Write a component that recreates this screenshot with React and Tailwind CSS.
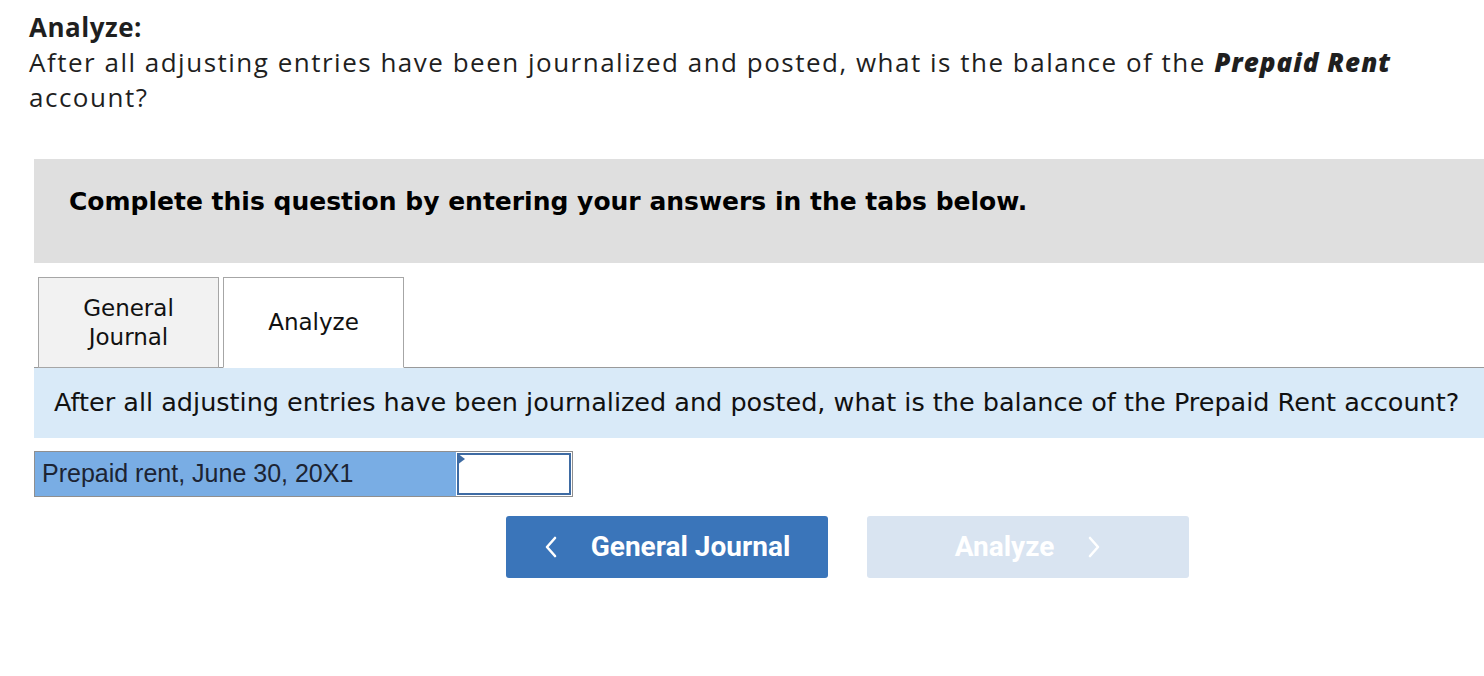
import React, { useState } from "react";

const App = () => {
  const [tab, setTab] = useState("analyze");
  const [value, setValue] = useState("");

  return (
    <div className="min-h-screen bg-white text-[#1f1f1f]">
      <div className="pl-[29px] pr-4 pt-[10px] font-['Open_Sans','Lato',sans-serif] tracking-[1.5px]">
        <h1 className="text-[26px] leading-[35px] font-bold tracking-[0.5px]">Analyze:</h1>
        <p className="text-[26px] leading-[35px]">
          After all adjusting entries have been journalized and posted, what is the balance of the{" "}
          <strong className="italic font-extrabold tracking-[1px]">Prepaid Rent</strong>
          <br />
          account?
        </p>
      </div>

      <div className="ml-[34px] mt-[44px] font-['DejaVu_Sans','Verdana',sans-serif]">
        <div className="bg-[#dfdfdf] h-[104px] pl-[35px] pt-[28px]">
          <p className="text-[25px] leading-[29px] font-bold text-black whitespace-nowrap">
            Complete this question by entering your answers in the tabs below.
          </p>
        </div>

        <div className="mt-[14px] flex items-end border-b border-[#9a9a9a] pl-[4px]">
          <button
            onClick={() => setTab("journal")}
            className={`w-[181px] h-[91px] -mb-px border border-[#a6a6a6] text-[23px] leading-[29px] text-[#111] ${
              tab === "journal" ? "bg-white border-b-white" : "bg-[#f2f2f2]"
            }`}
          >
            General
            <br />
            Journal
          </button>
          <button
            onClick={() => setTab("analyze")}
            className={`ml-[4px] w-[181px] h-[91px] -mb-px border border-[#a6a6a6] text-[23px] text-[#111] ${
              tab === "analyze" ? "bg-white border-b-white" : "bg-[#f2f2f2]"
            }`}
          >
            Analyze
          </button>
        </div>

        <div className="bg-[#d9eaf8] h-[70px] flex items-center pl-[20px] pb-[2px]">
          <p className="text-[25.5px] text-[#111] whitespace-nowrap">
            After all adjusting entries have been journalized and posted, what is the balance of the Prepaid Rent account?
          </p>
        </div>

        <div className="mt-[13px] w-[539px] h-[46px] border border-[#8f8f8f] flex">
          <div className="flex-1 bg-[#79ade4] flex items-center pl-[7px] font-['Liberation_Sans',Arial,sans-serif] text-[25px] text-[#1c2433]">
            Prepaid rent, June 30, 20X1
          </div>
          <div className="relative w-[116px] bg-white p-[1px]">
            <input
              value={value}
              onChange={(e) => setValue(e.target.value)}
              className="w-full h-full border-2 border-[#3e6ba3] outline-none px-2 text-[20px] font-['Liberation_Sans',Arial,sans-serif] text-right"
            />
            <span className="absolute left-[1px] top-[1px] w-0 h-0 border-y-[6px] border-y-transparent border-l-[8px] border-l-[#3e6ba3]" />
          </div>
        </div>

        <div className="mt-[19px] flex gap-[39px] pl-[472px] font-['Roboto','Liberation_Sans',sans-serif]">
          <button
            onClick={() => setTab("journal")}
            className="w-[322px] h-[62px] rounded-[3px] bg-[#3a75ba] text-white text-[28px] font-bold flex items-center justify-center gap-[33px]"
          >
            <svg width="14" height="24" viewBox="0 0 14 24" fill="none">
              <path d="M11 3 L3 12 L11 21" stroke="white" strokeWidth="2.6" strokeLinecap="round" strokeLinejoin="round" />
            </svg>
            <span>General Journal</span>
          </button>
          <button
            disabled
            className="w-[322px] h-[62px] rounded-[3px] bg-[#d9e4f1] text-white text-[28px] font-bold flex items-center justify-center gap-[33px]"
          >
            <span>Analyze</span>
            <svg width="14" height="24" viewBox="0 0 14 24" fill="none">
              <path d="M3 3 L11 12 L3 21" stroke="white" strokeWidth="2.6" strokeLinecap="round" strokeLinejoin="round" />
            </svg>
          </button>
        </div>
      </div>
    </div>
  );
};

export default App;
